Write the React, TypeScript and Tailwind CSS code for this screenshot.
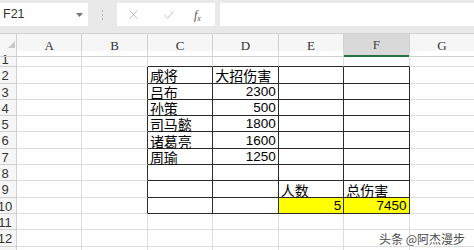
import React from 'react';

type Cell = { text?: string; num?: boolean; yellow?: boolean };

const COLS = ['A', 'B', 'C', 'D', 'E', 'F', 'G'];

// sheet content keyed by row, then column index (0 = A)
const data: Record<number, Record<number, Cell>> = {
  2: { 2: { text: '咸将' }, 3: { text: '大招伤害' } },
  3: { 2: { text: '吕布' }, 3: { text: '2300', num: true } },
  4: { 2: { text: '孙策' }, 3: { text: '500', num: true } },
  5: { 2: { text: '司马懿' }, 3: { text: '1800', num: true } },
  6: { 2: { text: '诸葛亮' }, 3: { text: '1600', num: true } },
  7: { 2: { text: '周瑜' }, 3: { text: '1250', num: true } },
  9: { 4: { text: '人数' }, 5: { text: '总伤害' } },
  10: { 4: { text: '5', num: true, yellow: true }, 5: { text: '7450', num: true, yellow: true } },
};

const inTable = (r: number, c: number) => r >= 2 && r <= 10 && c >= 2 && c <= 5;

function SheetCell({ r, c }: { r: number; c: number }) {
  const cell = data[r]?.[c];
  const darkRight = inTable(r, c) || inTable(r, c + 1);
  const darkBottom = inTable(r, c) || inTable(r + 1, c);
  return (
    <div
      className={[
        'h-[16.3px] border-r border-b flex items-center whitespace-nowrap',
        darkRight ? 'border-r-[#2b2b2b]' : 'border-r-[#dcdcdc]',
        darkBottom ? 'border-b-[#2b2b2b]' : 'border-b-[#dcdcdc]',
        cell?.yellow ? 'bg-[#ffff00]' : '',
        cell?.num
          ? 'justify-end pr-[2px] pt-[1px] text-[13.5px] leading-[14px] font-["Liberation_Sans",sans-serif]'
          : 'pl-[2px] pt-[1px] text-[14px] leading-[14px] font-["Noto_Sans_CJK_SC",sans-serif]',
      ].join(' ')}
    >
      {cell?.text}
    </div>
  );
}

export default function App() {
  const rows = Array.from({ length: 13 }, (_, i) => i + 1);

  return (
    <div className="relative h-[250px] w-[474px] overflow-hidden bg-white text-black">
      {/* formula bar */}
      <div className="flex h-[33px] bg-[#e9e9e9] pt-[3px]">
        <div className="relative flex h-[23px] w-[88px] items-center bg-white pl-[3px] font-['Liberation_Sans',sans-serif] text-[12.5px] text-[#333]">
          F21
          <svg className="absolute left-[76px] top-[10px]" width="7" height="4" viewBox="0 0 7 4">
            <path d="M0 0h7L3.5 4z" fill="#777" />
          </svg>
        </div>
        <div className="flex h-[23px] w-[29px] flex-col items-center justify-center gap-[2px]">
          <span className="h-[2px] w-[1.5px] bg-[#b5b5b5]" />
          <span className="h-[2px] w-[1.5px] bg-[#b5b5b5]" />
          <span className="h-[2px] w-[1.5px] bg-[#b5b5b5]" />
        </div>
        <div className="flex h-[23px] w-[98px] items-center bg-white">
          <svg className="ml-[12px]" width="9" height="9" viewBox="0 0 9 9">
            <path d="M0.5 0.5l8 8M8.5 0.5l-8 8" stroke="#bdbdbd" strokeWidth="1" />
          </svg>
          <svg className="ml-[26px]" width="10" height="8" viewBox="0 0 10 8">
            <path d="M0.5 4l3 3.3L9.5 0.5" stroke="#bdbdbd" strokeWidth="1" fill="none" />
          </svg>
          <span className="ml-[20px] font-['Liberation_Serif',serif] text-[12px] italic text-[#555]">
            f<sub className="text-[8px]">x</sub>
          </span>
        </div>
        <div className="ml-[5px] h-[23px] flex-1 bg-white" />
      </div>

      {/* column headers */}
      <div className="grid h-[18px] grid-cols-[17px_repeat(7,65.45px)] border-t border-t-[#d4d4d4] bg-[#f6f6f6] font-['Liberation_Serif',serif] text-[13px] text-[#333]">
        <div className="relative border-r border-b border-[#d0d0d0]">
          <svg className="absolute left-[8px] top-[7px]" width="7" height="7" viewBox="0 0 7 7">
            <path d="M7 0v7H0z" fill="#c9c9c9" />
          </svg>
        </div>
        {COLS.map((c) => (
          <div
            key={c}
            className={
              c === 'F'
                ? 'flex items-center justify-center border-r border-b-2 border-r-[#d0d0d0] border-b-[#217346] bg-[#d9d9d9] pt-[1px] text-[#444]'
                : 'flex items-center justify-center border-r border-b border-[#d0d0d0] pt-[1px]'
            }
          >
            {c}
          </div>
        ))}
      </div>

      {/* rows */}
      {rows.map((r) => (
        <div key={r} className="grid grid-cols-[17px_repeat(7,65.45px)]">
          <div className="h-[16.3px] overflow-hidden border-r border-b border-[#d0d0d0] bg-[#f6f6f6]">
            <div className="ml-[-8px] w-[26px] text-center font-['Liberation_Sans',sans-serif] text-[13px] leading-[17px] text-[#333]">
              {r}
            </div>
          </div>
          {COLS.map((_, c) => (
            <SheetCell key={c} r={r} c={c} />
          ))}
        </div>
      ))}

      {/* watermark */}
      <div className="absolute left-[379px] top-[231px] whitespace-nowrap font-['Noto_Sans_CJK_SC',sans-serif] text-[12px] leading-[15px] text-[#4a4a4a] [text-shadow:0_0_2px_#fff,0_0_2px_#fff]">
        头条 @阿杰漫步
      </div>
    </div>
  );
}
